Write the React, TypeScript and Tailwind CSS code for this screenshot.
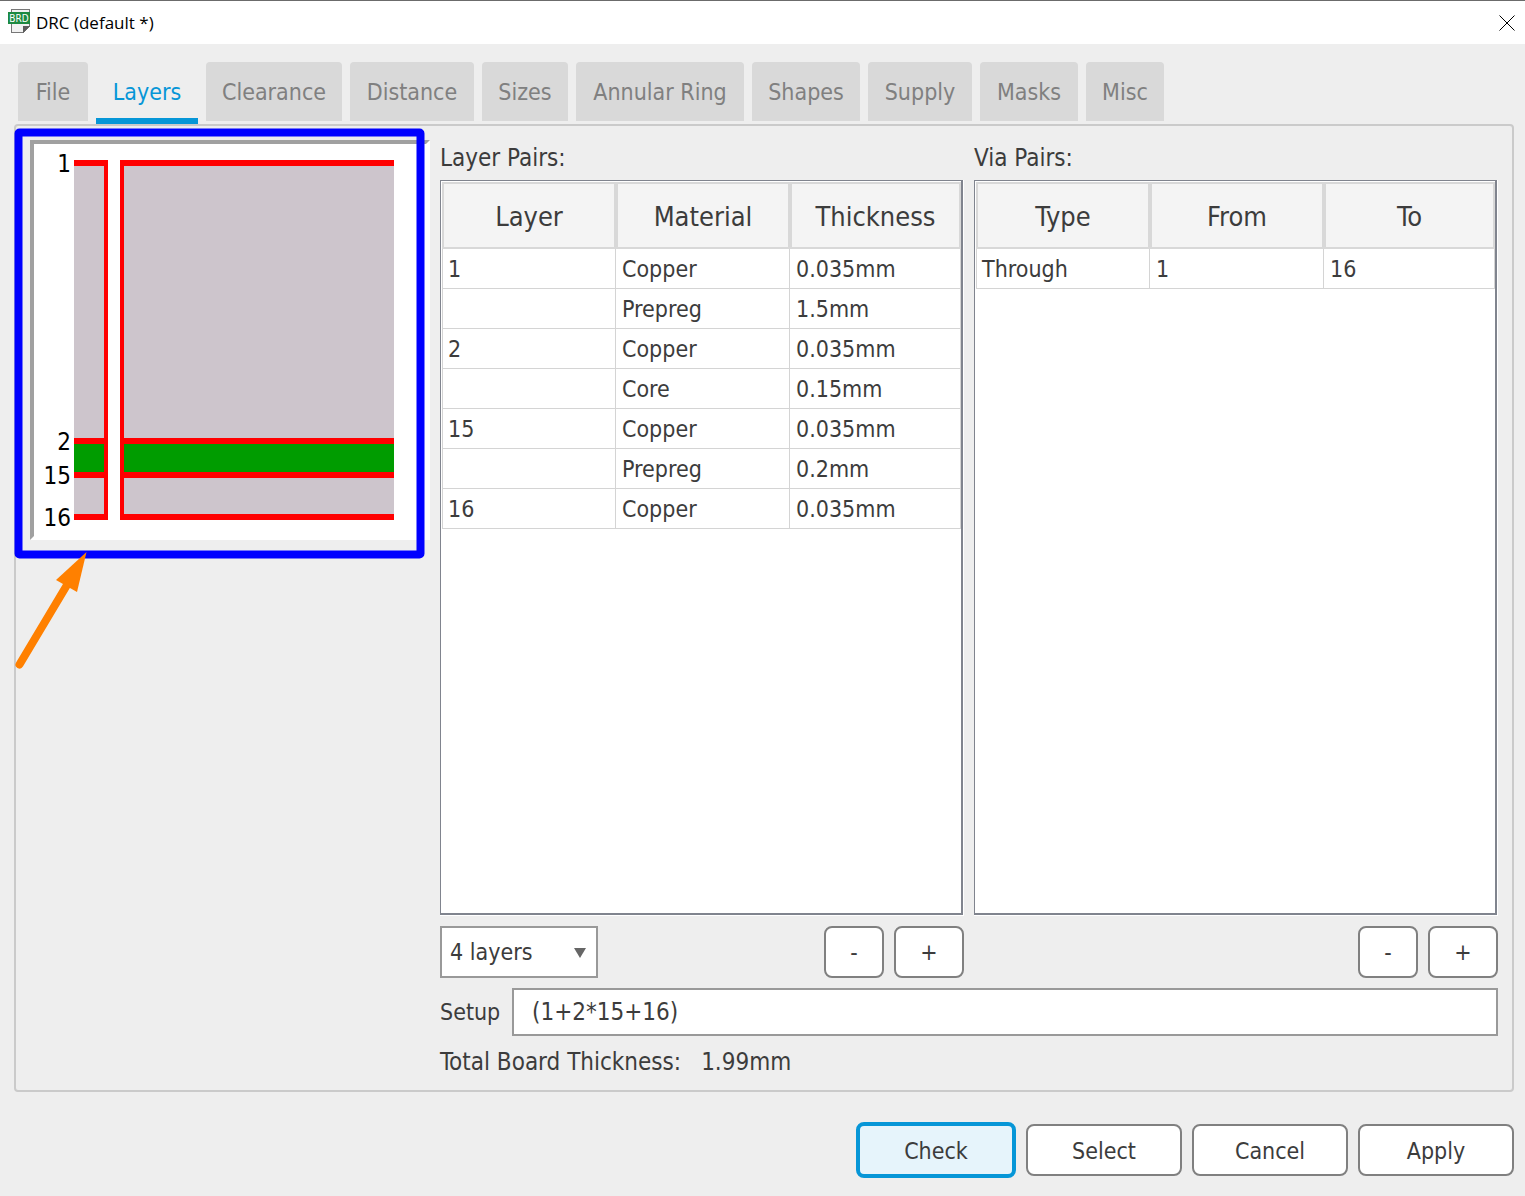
import { useState } from "react";

const TABS = [
  { name: "File", width: "w-[70px]" },
  { name: "Layers", width: "w-[102px]" },
  { name: "Clearance", width: "w-[136px]" },
  { name: "Distance", width: "w-[124px]" },
  { name: "Sizes", width: "w-[86px]" },
  { name: "Annular Ring", width: "w-[168px]" },
  { name: "Shapes", width: "w-[108px]" },
  { name: "Supply", width: "w-[104px]" },
  { name: "Masks", width: "w-[98px]" },
  { name: "Misc", width: "w-[78px]" },
];

const LAYER_ROWS = [
  ["1", "Copper", "0.035mm"],
  ["", "Prepreg", "1.5mm"],
  ["2", "Copper", "0.035mm"],
  ["", "Core", "0.15mm"],
  ["15", "Copper", "0.035mm"],
  ["", "Prepreg", "0.2mm"],
  ["16", "Copper", "0.035mm"],
];

const VIA_ROWS = [["Through", "1", "16"]];

function BoardFileIcon() {
  return (
    <svg width="22" height="28" viewBox="0 0 22 28" aria-hidden="true">
      <path d="M3.500 .5h18v17l-6 6h-12z" fill="#f2f2f2" stroke="#777" shapeRendering="crispEdges" />
      <path d="M15 24v-7h7z" fill="#5c5c5c" />
      <rect x="0" y="3" width="22" height="12" fill="#1d8a41" />
      <text x="11" y="13" textAnchor="middle" fontSize="10" fill="#fff">
        BRD
      </text>
    </svg>
  );
}

function TitleBar() {
  return (
    <header className="flex h-11 items-center justify-between border-t border-[#6b6b6b] bg-white pr-2 pl-2">
      <div className="flex items-center gap-[6px]">
        <BoardFileIcon />
        <h1 className="font-['Open_Sans',sans-serif] text-[17px] leading-6 text-black">DRC (default *)</h1>
      </div>
      <button type="button" aria-label="Close" className="flex h-6 w-5 justify-center pt-1">
        <svg width="16" height="16" viewBox="0 0 16 16" aria-hidden="true">
          <path d="M.5 .5l15 15M15.500 .5l-15 15" stroke="#000" fill="none" />
        </svg>
      </button>
    </header>
  );
}

function StackDrawing() {
  const copper = [160, 438, 472, 514];
  const labels = ["1", "2", "15", "16"];
  return (
    <svg width="392" height="392" viewBox="34 144 392 392" role="img" aria-label="Layer stack" className="block">
      <g shapeRendering="crispEdges">
        <path d="M74 160h34v360H74zM120 160h274v360H120z" fill="#cdc5cc" />
        <path d="M74 440h34v36H74zM120 440h274v36H120z" fill="#009c00" />
        {copper.map((y) => (
          <path key={y} d={`M74 ${y}h34v6H74zM120 ${y}h274v6H120z`} fill="#f00" />
        ))}
        <path d="M104 160h4v360h-4zM120 160h4v360h-4z" fill="#f00" />
      </g>
      {labels.map((label, i) => (
        <text key={label} x="71" y={copper[i] + 12} textAnchor="end" fontSize="24" fill="#000">
          {label}
        </text>
      ))}
    </svg>
  );
}

function StackPreview() {
  return (
    <div className="relative size-[400px] shrink-0">
      <div className="size-full border-4 border-t-[#a0a0a0] border-r-white border-b-white border-l-[#a0a0a0] bg-white">
        <StackDrawing />
      </div>
      <svg
        width="440"
        height="560"
        viewBox="0 120 440 560"
        aria-hidden="true"
        className="pointer-events-none absolute -top-5 -left-[30px]"
      >
        <rect x="18.500" y="132.500" width="402" height="422" rx="1" fill="none" stroke="#00f" strokeWidth="8" strokeLinejoin="round" />
        <path d="M19.500 664.500L67 585" stroke="#ff8000" strokeWidth="8" strokeLinecap="round" />
        <path d="M86.500 552L56 580L77 592Z" fill="#ff8000" />
      </svg>
    </div>
  );
}

function PairTable({ label, columns, rows }: { label: string; columns: string[]; rows: string[][] }) {
  return (
    <div className="grow border-r border-b border-white">
      <div className="h-full border-t border-r-2 border-b-2 border-l border-[#80848e] bg-white pt-px pl-px">
        <table aria-label={label} className="w-full table-fixed border-separate border-spacing-0">
          <thead>
            <tr>
              {columns.map((c, i) => (
                <th
                  key={c}
                  scope="col"
                  className={`h-[67px] border-2 border-[#d8d8d8] bg-[#f4f4f4] p-0 pt-[3px] text-[27px] leading-8 font-normal ${i < 2 ? "w-[174px]" : ""}`}
                >
                  {c}
                </th>
              ))}
            </tr>
          </thead>
          <tbody>
            {rows.map((row, r) => (
              <tr key={r}>
                {row.map((cell, i) => (
                  <td
                    key={i}
                    className={`h-10 border-b border-[#d4d4d4] py-0 pr-0 text-[23px] leading-8 ${
                      i === 0 ? "border-x pl-[5px]" : "border-r pl-[6px]"
                    }`}
                  >
                    {cell}
                  </td>
                ))}
              </tr>
            ))}
          </tbody>
        </table>
      </div>
    </div>
  );
}

function StepButtons({ subject }: { subject: string }) {
  const base = "h-[52px] rounded-lg border-2 border-[#808080] bg-white";
  return (
    <div className="ml-auto flex gap-[10px]">
      <button type="button" aria-label={`Remove ${subject}`} className={`${base} w-[60px]`}>
        -
      </button>
      <button type="button" aria-label={`Add ${subject}`} className={`${base} w-[70px]`}>
        +
      </button>
    </div>
  );
}

export default function App() {
  const [tab, setTab] = useState("Layers");
  const [setup, setSetup] = useState("(1+2*15+16)");
  const action = "h-[52px] w-[156px] rounded-lg border-2 border-[#808080] bg-white pt-[2px]";

  return (
    <div className="flex min-h-screen flex-col bg-[#eeeeee] font-['DejaVu_Sans_Condensed','DejaVu_Sans',sans-serif] text-[23px] leading-8 text-[#3c3c3c]">
      <TitleBar />
      <main className="flex grow flex-col pt-[18px] pr-[11px] pb-[18px] pl-[14px]">
        <div role="tablist" className="flex h-[62px] items-start gap-2 pl-1">
          {TABS.map((t) => (
            <button
              key={t.name}
              type="button"
              role="tab"
              aria-selected={t.name === tab}
              onClick={() => setTab(t.name)}
              className={`${t.width} shrink-0 whitespace-nowrap ${
                t.name === tab
                  ? "h-[62px] border-b-[6px] border-[#0696d7] pt-[3px] text-[#0696d7]"
                  : "h-[59px] rounded-t bg-[#d9d9d9] text-[#808080]"
              }`}
            >
              {t.name}
            </button>
          ))}
        </div>

        <section role="tabpanel" aria-label={tab} className="flex grow gap-[10px] rounded-sm border-2 border-[#cacaca] p-[14px] pb-3">
          <StackPreview />
          <div className="flex grow flex-col gap-[10px]">
            <div className="grid grow grid-cols-2 gap-[10px]">
              <div className="flex flex-col gap-[10px]">
                <div className="flex grow flex-col gap-[6px]">
                  <h2 className="pt-[2px] text-2xl leading-8">Layer Pairs:</h2>
                  <PairTable label="Layer pairs" columns={["Layer", "Material", "Thickness"]} rows={LAYER_ROWS} />
                </div>
                <div className="flex">
                  <div className="relative w-[158px]">
                    <select
                      aria-label="Number of layers"
                      defaultValue="4"
                      className="h-[52px] w-full appearance-none border-2 border-[#999] bg-white pl-2"
                    >
                      <option value="2">2 layers</option>
                      <option value="4">4 layers</option>
                      <option value="6">6 layers</option>
                    </select>
                    <svg width="12" height="10" viewBox="0 0 12 10" aria-hidden="true" className="pointer-events-none absolute top-[22px] right-3">
                      <path d="M0 0h12L6 10z" fill="#666" />
                    </svg>
                  </div>
                  <StepButtons subject="layer pair" />
                </div>
              </div>
              <div className="flex flex-col gap-[10px]">
                <div className="flex grow flex-col gap-[6px]">
                  <h2 className="pt-[2px] text-2xl leading-8">Via Pairs:</h2>
                  <PairTable label="Via pairs" columns={["Type", "From", "To"]} rows={VIA_ROWS} />
                </div>
                <div className="flex">
                  <StepButtons subject="via pair" />
                </div>
              </div>
            </div>
            <div className="flex items-center">
              <label htmlFor="setup" className="w-[72px]">
                Setup
              </label>
              <input
                id="setup"
                type="text"
                value={setup}
                onChange={(e) => setSetup(e.target.value)}
                className="h-12 min-w-0 grow border-2 border-[#999] bg-white px-[18px] text-2xl"
              />
            </div>
            <p className="flex gap-5 text-2xl leading-8">
              <span>Total Board Thickness:</span>
              <span>1.99mm</span>
            </p>
          </div>
        </section>

        <footer className="flex items-center justify-end gap-[10px] pt-[30px]">
          <button type="button" className="h-14 w-40 rounded-lg border-4 border-[#0696d7] bg-[#e6f4fb] pt-[2px]">
            Check
          </button>
          <button type="button" className={action}>Select</button>
          <button type="button" className={action}>Cancel</button>
          <button type="button" className={action}>Apply</button>
        </footer>
      </main>
    </div>
  );
}
